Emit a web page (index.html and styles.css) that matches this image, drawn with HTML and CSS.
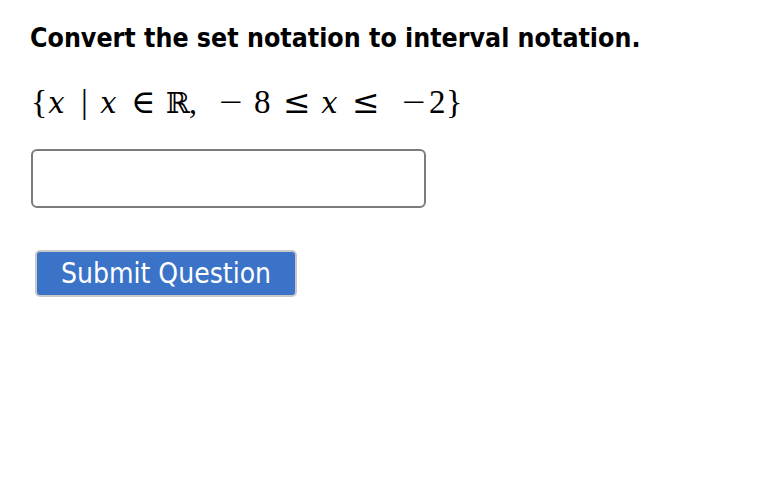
FILE: index.html
```html
<!DOCTYPE html>
<html>
<head>
<meta charset="utf-8">
<link rel="stylesheet" href="styles.css">
</head>
<body>
<div class="page">
  <h1 class="title">Convert the set notation to interval notation.</h1>
  <div class="math">
    <span class="tk brace open">{</span>
    <span class="tk var v1">x</span>
    <span class="tk bar">|</span>
    <span class="tk var v2">x</span>
    <span class="tk rel in">∈</span>
    <span class="tk bb">ℝ</span>
    <span class="tk comma">,</span>
    <span class="tk minus m1">−</span>
    <span class="tk num n1">8</span>
    <span class="tk rel le1">≤</span>
    <span class="tk var v3">x</span>
    <span class="tk rel le2">≤</span>
    <span class="tk minus m2">−</span>
    <span class="tk num n2">2</span>
    <span class="tk brace close">}</span>
  </div>
  <input class="answer" type="text">
  <button class="submit">Submit Question</button>
</div>
</body>
</html>
```

FILE: styles.css
```css
html, body { margin: 0; padding: 0; background: #fff; }
.page {
  padding: 19px 0 0 30px;
  display: flex;
  flex-direction: column;
  align-items: flex-start;
}
.title {
  margin: 0;
  font-family: "DejaVu Sans Condensed", "DejaVu Sans", sans-serif;
  font-stretch: condensed;
  font-weight: bold;
  font-size: 26.5px;
  line-height: 38px;
  color: #000;
}
.math {
  margin-top: 23px;
  height: 44px;
  display: flex;
  align-items: baseline;
  font-family: "Liberation Serif", serif;
  font-size: 32px;
  line-height: 44px;
  color: #000;
}
.tk { display: inline-block; text-align: center; white-space: nowrap; }
.brace { width: 15px; font-size: 34px; }
.var { width: 19px; font-family: "DejaVu Serif", serif; font-style: italic; font-size: 29px; }
.bar { width: 6px; font-size: 34px; }
.rel { width: 23px; font-family: "DejaVu Serif", serif; font-size: 33px; }
.bb { width: 21px; font-family: "DejaVu Serif", serif; font-size: 29px; }
.comma { width: 6px; }
.minus { width: 23px; transform: scaleX(1.3); }
.num { width: 16px; font-size: 33px; }
.open { margin-left: 1px; }
.v1 { margin-left: 1px; }
.bar { margin-left: 15px; }
.v2 { margin-left: 12px; }
.in { margin-left: 13px; }
.bb { margin-left: 12px; }
.comma { margin-left: 2px; }
.m1 { margin-left: 24px; }
.n1 { margin-left: 12px; }
.le1 { margin-left: 13px; }
.v3 { margin-left: 14px; }
.le2 { margin-left: 13px; }
.m2 { margin-left: 27px; }
.n2 { margin-left: 4px; }
.close { margin-left: 1px; }
.answer {
  margin: 25px 0 0 1px;
  width: 395px;
  height: 59px;
  box-sizing: border-box;
  border: 2px solid #7c7c7c;
  border-radius: 6px;
  background: #fff;
}
.submit {
  margin: 42px 0 0 5px;
  width: 262px;
  height: 47px;
  box-sizing: border-box;
  background: #3b73c9;
  border: 2px solid #c9c9c9;
  border-radius: 5px;
  color: #fff;
  font-family: "DejaVu Sans Condensed", "DejaVu Sans", sans-serif;
  font-stretch: condensed;
  font-size: 28px;
  line-height: 43px;
  padding: 0;
}
```
